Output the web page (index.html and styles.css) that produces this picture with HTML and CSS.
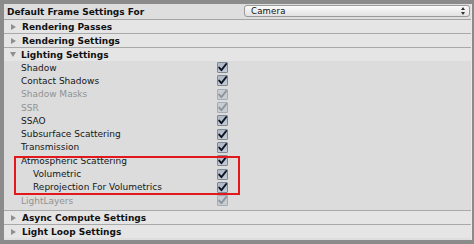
FILE: index.html
```html
<!DOCTYPE html>
<html>
<head>
<meta charset="utf-8">
<link rel="stylesheet" href="styles.css">
</head>
<body>
<div class="panel">
  <div class="top">
    <span class="top-label">Default Frame Settings For</span>
    <div class="dropdown">
      <span>Camera</span>
      <svg class="updown" width="4" height="8" viewBox="0 0 4 8"><path d="M2 0 L4 3 L0 3 Z M0 5 L4 5 L2 8 Z" fill="#333"/></svg>
    </div>
  </div>
  <div class="hdr"><span class="tri right"></span><span class="hlabel">Rendering Passes</span></div>
  <div class="hdr"><span class="tri right"></span><span class="hlabel">Rendering Settings</span></div>
  <div class="hdr"><span class="tri down"></span><span class="hlabel">Lighting Settings</span></div>
  <div class="items">
    <div class="row"><span class="lbl">Shadow</span><span class="cb"><svg viewBox="0 0 11 11"><path d="M2.2 5.6 L4.4 8.2 L9.2 2"/></svg></span></div>
    <div class="row"><span class="lbl">Contact Shadows</span><span class="cb"><svg viewBox="0 0 11 11"><path d="M2.2 5.6 L4.4 8.2 L9.2 2"/></svg></span></div>
    <div class="row dis"><span class="lbl">Shadow Masks</span><span class="cb"><svg viewBox="0 0 11 11"><path d="M2.2 5.6 L4.4 8.2 L9.2 2"/></svg></span></div>
    <div class="row dis"><span class="lbl">SSR</span><span class="cb"><svg viewBox="0 0 11 11"><path d="M2.2 5.6 L4.4 8.2 L9.2 2"/></svg></span></div>
    <div class="row"><span class="lbl">SSAO</span><span class="cb"><svg viewBox="0 0 11 11"><path d="M2.2 5.6 L4.4 8.2 L9.2 2"/></svg></span></div>
    <div class="row"><span class="lbl">Subsurface Scattering</span><span class="cb"><svg viewBox="0 0 11 11"><path d="M2.2 5.6 L4.4 8.2 L9.2 2"/></svg></span></div>
    <div class="row"><span class="lbl">Transmission</span><span class="cb"><svg viewBox="0 0 11 11"><path d="M2.2 5.6 L4.4 8.2 L9.2 2"/></svg></span></div>
    <div class="row"><span class="lbl">Atmospheric Scattering</span><span class="cb"><svg viewBox="0 0 11 11"><path d="M2.2 5.6 L4.4 8.2 L9.2 2"/></svg></span></div>
    <div class="row"><span class="lbl ind">Volumetric</span><span class="cb"><svg viewBox="0 0 11 11"><path d="M2.2 5.6 L4.4 8.2 L9.2 2"/></svg></span></div>
    <div class="row"><span class="lbl ind">Reprojection For Volumetrics</span><span class="cb"><svg viewBox="0 0 11 11"><path d="M2.2 5.6 L4.4 8.2 L9.2 2"/></svg></span></div>
    <div class="row dis"><span class="lbl">LightLayers</span><span class="cb"><svg viewBox="0 0 11 11"><path d="M2.2 5.6 L4.4 8.2 L9.2 2"/></svg></span></div>
    <div class="highlight"></div>
  </div>
  <div class="hdr sep"><span class="tri right"></span><span class="hlabel">Async Compute Settings</span></div>
  <div class="hdr"><span class="tri right"></span><span class="hlabel">Light Loop Settings</span></div>
</div>
</body>
</html>
```
FILE: styles.css
```css
html, body {
  margin: 0;
  padding: 0;
  background: #8b8b8b;
  width: 474px;
  height: 244px;
  overflow: hidden;
  font-family: "DejaVu Sans", sans-serif;
  font-size: 9px;
  color: #161616;
}
.panel {
  margin: 4px 2px 0 4px;
  width: 468px;
  height: 236px;
  background: #dedede;
  display: flex;
  flex-direction: column;
  border-right: 1px solid #e8e8e8;
  box-sizing: border-box;
}
.top {
  height: 15px;
  flex: none;
  display: flex;
  align-items: center;
  background: #dedede;
  border-bottom: 1px solid #a4a4a4;
  position: relative;
}
.top-label {
  font-weight: bold;
  margin-left: 3px;
  color: #111;
}
.dropdown {
  position: absolute;
  left: 240px;
  top: 1px;
  width: 226px;
  height: 12px;
  box-sizing: border-box;
  border: 1px solid #9a9a9a;
  border-radius: 3px;
  background: linear-gradient(#fbfbfb, #e2e2e2);
  display: flex;
  align-items: center;
  justify-content: space-between;
  padding: 0 4px 0 6px;
  font-size: 8.5px;
  color: #111;
  letter-spacing: 0.2px;
}
.updown { display: block; }
.hdr {
  height: 13px;
  flex: none;
  display: flex;
  align-items: center;
  background: #e5e5e5;
  border-bottom: 1px solid #a9a9a9;
}
.hdr:nth-child(4) { border-bottom: none; }
.hdr.sep { border-top: 1px solid #a9a9a9; }
.hdr:last-child { border-bottom: none; height: 13px; }
.tri {
  width: 0;
  height: 0;
  margin-left: 7px;
  margin-right: 6px;
}
.tri.right {
  border-top: 3.5px solid transparent;
  border-bottom: 3.5px solid transparent;
  border-left: 5px solid #8f8f8f;
}
.tri.down {
  margin-left: 6px;
  margin-right: 5px;
  border-left: 3.5px solid transparent;
  border-right: 3.5px solid transparent;
  border-top: 5px solid #8f8f8f;
}
.hlabel {
  font-weight: bold;
  color: #111;
}
.items {
  position: relative;
  flex: none;
  padding-bottom: 3px;
  background: #dcdcdc;
}
.row {
  height: 13.3px;
  display: flex;
  align-items: center;
  position: relative;
}
.lbl {
  margin-left: 17px;
  width: 196px;
}
.lbl.ind {
  margin-left: 29px;
  width: 184px;
}
.cb {
  width: 11px;
  height: 11px;
  box-sizing: border-box;
  border: 1px solid #808894;
  border-radius: 1px;
  background: linear-gradient(#aeb8c6, #c4ccd6);
  display: block;
}
.cb svg {
  display: block;
  width: 11px;
  height: 11px;
  margin: -1px 0 0 -1px;
}
.cb svg path {
  fill: none;
  stroke: #0d1424;
  stroke-width: 1.9;
  stroke-linecap: round;
  stroke-linejoin: round;
}
.row.dis .lbl { color: #929292; }
.row.dis .cb {
  border-color: #a6acb4;
  background: #c8cdd3;
}
.row.dis .cb svg path { stroke: #8e949c; }
.highlight {
  position: absolute;
  left: 10px;
  top: 95px;
  width: 226px;
  height: 39px;
  box-sizing: border-box;
  border: 2px solid #e3181c;
  pointer-events: none;
}
```
